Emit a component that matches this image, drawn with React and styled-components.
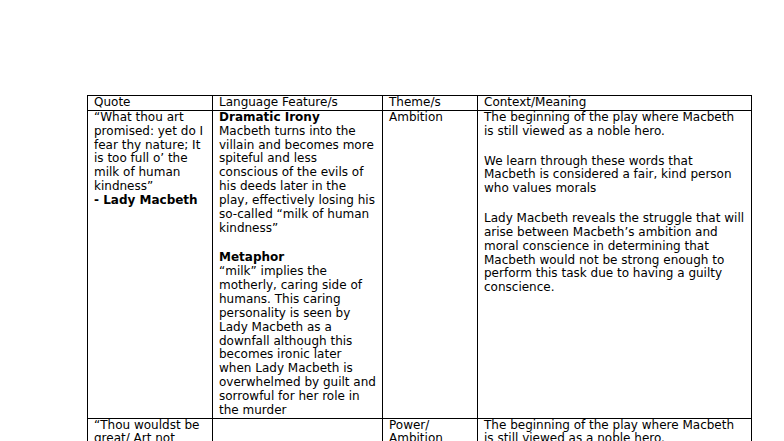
import React from "react";
import styled, { createGlobalStyle } from "styled-components";

const Global = createGlobalStyle`
  html, body { margin: 0; padding: 0; background: #fff; }
  body { font-family: "DejaVu Sans", Verdana, sans-serif; color: #000; overflow: hidden; }
`;

const Page = styled.div`
  width: 784px;
  height: 441px;
  padding: 95px 0 0 87px;
  box-sizing: border-box;
  overflow: hidden;
`;

const Table = styled.table`
  border-collapse: collapse;
  table-layout: fixed;
  width: 665px;
  font-size: 12px;
  line-height: 13.85px;
`;

const Col = styled.col`
  width: ${(p) => p.$w}px;
`;

const Head = styled.th`
  border: 1px solid #000;
  padding: 0 5px 0 6px;
  text-align: left;
  font-weight: normal;
  vertical-align: top;
  white-space: nowrap;
`;

const Cell = styled.td`
  border: 1px solid #000;
  padding: 0 5px 0 6px;
  vertical-align: top;
  white-space: nowrap;
  overflow: hidden;
`;

const Para = styled.p`
  margin: ${(p) => (p.$gap ? "16px" : "0")} 0 0 0;
`;

const Bold = styled.span`
  font-weight: bold;
`;

const lines = (arr) =>
  arr.map((l, i) => (
    <React.Fragment key={i}>
      {i > 0 && <br />}
      {l}
    </React.Fragment>
  ));

export default function App() {
  return (
    <Page>
      <Global />
      <Table>
        <colgroup>
          <Col $w={125} />
          <Col $w={170} />
          <Col $w={95} />
          <Col $w={274} />
        </colgroup>
        <thead>
          <tr>
            <Head>Quote</Head>
            <Head>Language Feature/s</Head>
            <Head>Theme/s</Head>
            <Head>Context/Meaning</Head>
          </tr>
        </thead>
        <tbody>
          <tr>
            <Cell>
              <Para>
                {lines([
                  "“What thou art",
                  "promised: yet do I",
                  "fear thy nature; It",
                  "is too full o’ the",
                  "milk of human",
                  "kindness”",
                ])}
                <br />
                <Bold>- Lady Macbeth</Bold>
              </Para>
            </Cell>
            <Cell>
              <Para>
                <Bold>Dramatic Irony</Bold>
                <br />
                {lines([
                  "Macbeth turns into the",
                  "villain and becomes more",
                  "spiteful and less",
                  "conscious of the evils of",
                  "his deeds later in the",
                  "play, effectively losing his",
                  "so-called “milk of human",
                  "kindness”",
                ])}
              </Para>
              <Para $gap>
                <Bold>Metaphor</Bold>
                <br />
                {lines([
                  "“milk” implies the",
                  "motherly, caring side of",
                  "humans. This caring",
                  "personality is seen by",
                  "Lady Macbeth as a",
                  "downfall although this",
                  "becomes ironic later",
                  "when Lady Macbeth is",
                  "overwhelmed by guilt and",
                  "sorrowful for her role in",
                  "the murder",
                ])}
              </Para>
            </Cell>
            <Cell>Ambition</Cell>
            <Cell>
              <Para>
                {lines([
                  "The beginning of the play where Macbeth",
                  "is still viewed as a noble hero.",
                ])}
              </Para>
              <Para $gap>
                {lines([
                  "We learn through these words that",
                  "Macbeth is considered a fair, kind person",
                  "who values morals",
                ])}
              </Para>
              <Para $gap>
                {lines([
                  "Lady Macbeth reveals the struggle that will",
                  "arise between Macbeth’s ambition and",
                  "moral conscience in determining that",
                  "Macbeth would not be strong enough to",
                  "perform this task due to having a guilty",
                  "conscience.",
                ])}
              </Para>
            </Cell>
          </tr>
          <tr>
            <Cell>
              {lines(["“Thou wouldst be", "great/ Art not", "without ambition,"])}
            </Cell>
            <Cell></Cell>
            <Cell>{lines(["Power/", "Ambition"])}</Cell>
            <Cell>
              {lines([
                "The beginning of the play where Macbeth",
                "is still viewed as a noble hero.",
              ])}
            </Cell>
          </tr>
        </tbody>
      </Table>
    </Page>
  );
}
